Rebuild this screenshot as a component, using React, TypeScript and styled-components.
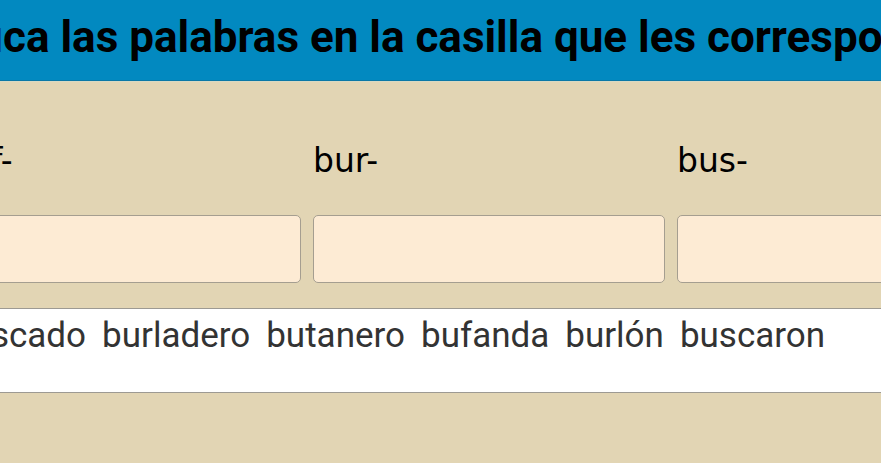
import React from "react";
import styled, { createGlobalStyle } from "styled-components";

const Global = createGlobalStyle`
  html, body { margin: 0; padding: 0; }
  body { background: #e2d5b4; overflow: hidden; }
`;

const Page = styled.div`
  width: 881px;
  height: 463px;
  overflow: hidden;
  background: #e2d5b4;
  display: flex;
  flex-direction: column;
`;

const Header = styled.header`
  height: 81px;
  flex: none;
  box-sizing: border-box;
  padding-bottom: 6px;
  background: #0289c0;
  border-bottom: 1px solid #0a78a6;
  box-shadow: 0 1px 0 #d8d9c2;
  display: flex;
  align-items: center;
  overflow: hidden;
  white-space: nowrap;
`;

const Title = styled.h1`
  margin: 0 0 0 -122px;
  font-family: Roboto, "Liberation Sans", sans-serif;
  font-weight: 700;
  font-size: 44px;
  line-height: 1;
  color: #000;
  letter-spacing: 0;
`;

const Board = styled.main`
  margin-left: -51px;
  padding-top: 59px;
  display: flex;
  flex-direction: column;
`;

const Columns = styled.div`
  display: flex;
  gap: 12px;
`;

const Column = styled.div`
  width: 352px;
  flex: none;
  display: flex;
  flex-direction: column;
`;

const Label = styled.div`
  font-family: "DejaVu Sans", sans-serif;
  font-size: 33px;
  line-height: 42px;
  color: #000;
  height: 42px;
  margin-bottom: 33px;
`;

const DropBox = styled.div`
  height: 66px;
  background: #fdebd4;
  border: 1px solid #a59e90;
  border-radius: 5px;
`;

const Bank = styled.div`
  margin-top: 25px;
  margin-left: -200px;
  width: 1400px;
  height: 83px;
  background: #fff;
  border-top: 1px solid #9d9a93;
  border-bottom: 1px solid #9d9a93;
  box-sizing: content-box;
  display: flex;
  align-items: flex-start;
  gap: 16px;
  padding-left: 203px;
`;

const Word = styled.span`
  font-family: Roboto, "Liberation Sans", sans-serif;
  font-size: 35px;
  line-height: 54px;
  color: #333;
`;

const categories = ["buf-", "bur-", "bus-", "but-"];
const words = ["buscado", "burladero", "butanero", "bufanda", "burlón", "buscaron"];

export default function App() {
  return (
    <Page>
      <Global />
      <Header>
        <Title>Clasifica las palabras en la casilla que les corresponde</Title>
      </Header>
      <Board>
        <Columns>
          {categories.map((c) => (
            <Column key={c}>
              <Label>{c}</Label>
              <DropBox />
            </Column>
          ))}
        </Columns>
        <Bank>
          {words.map((w) => (
            <Word key={w}>{w}</Word>
          ))}
        </Bank>
      </Board>
    </Page>
  );
}
